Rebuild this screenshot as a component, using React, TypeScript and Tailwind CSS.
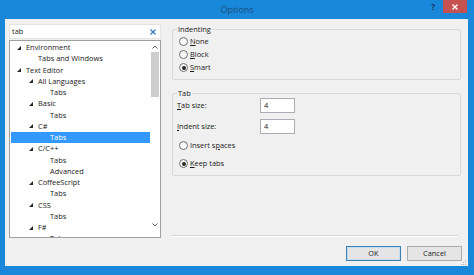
import type { ReactNode } from 'react';

type Row = { t: string; d: number; node?: boolean; sel?: boolean };

const rows: Row[] = [
  { t: 'Environment', d: 0, node: true },
  { t: 'Tabs and Windows', d: 1 },
  { t: 'Text Editor', d: 0, node: true },
  { t: 'All Languages', d: 1, node: true },
  { t: 'Tabs', d: 2 },
  { t: 'Basic', d: 1, node: true },
  { t: 'Tabs', d: 2 },
  { t: 'C#', d: 1, node: true },
  { t: 'Tabs', d: 2, sel: true },
  { t: 'C/C++', d: 1, node: true },
  { t: 'Tabs', d: 2 },
  { t: 'Advanced', d: 2 },
  { t: 'CoffeeScript', d: 1, node: true },
  { t: 'Tabs', d: 2 },
  { t: 'CSS', d: 1, node: true },
  { t: 'Tabs', d: 2 },
  { t: 'F#', d: 1, node: true },
  { t: 'Tabs', d: 2 },
];

const indent: Record<number, string> = {
  0: 'pl-[6px]',
  1: 'pl-[18px]',
  2: 'pl-[30px]',
};

function Expander() {
  return (
    <svg width="4" height="4" viewBox="0 0 4 4">
      <polygon points="4,0 4,4 0,4" fill="#262626" />
    </svg>
  );
}

function TreeRow({ row }: { row: Row }) {
  return (
    <div
      className={`flex items-center h-[11.25px] shrink-0 ml-[1px] leading-[11px] ${indent[row.d]} ${
        row.sel ? 'bg-[#3399ff] text-white' : ''
      }`}
    >
      <span className="w-[4px] h-[4px] flex">{row.node && <Expander />}</span>
      <span className="ml-[5px] whitespace-nowrap">{row.t}</span>
    </div>
  );
}

function Radio({ checked, children }: { checked?: boolean; children: ReactNode }) {
  return (
    <div className="flex items-center gap-[2px] h-[13px] ml-[2px]">
      <span className="w-[9px] h-[9px] rounded-full border border-[#707070] bg-gradient-to-b from-[#f2f2f2] to-white flex items-center justify-center">
        {checked && <span className="w-[4px] h-[4px] rounded-full bg-[#262626]" />}
      </span>
      <span className="leading-[11px]">{children}</span>
    </div>
  );
}

function Field({ label, value }: { label: ReactNode; value: string }) {
  return (
    <div className="flex items-center h-[15px]">
      <span className="w-[83px] leading-[11px]">{label}</span>
      <div className="w-[35px] h-[15px] bg-white border border-[#abadb3] pl-[3px] leading-[13px]">
        {value}
      </div>
    </div>
  );
}

function Button({ children, primary }: { children: ReactNode; primary?: boolean }) {
  return (
    <div
      className={`w-[55px] h-[15px] flex items-center justify-center bg-[#e5e5e5] border leading-[11px] ${
        primary ? 'border-[#3c7fb1] shadow-[inset_0_0_0_1px_#c4dcf2]' : 'border-[#acacac]'
      }`}
    >
      {children}
    </div>
  );
}

export default function App() {
  return (
    <div className="w-[474px] h-[275px] bg-[#1a88da] flex flex-col overflow-hidden font-['Open_Sans',sans-serif] text-[7.4px] text-[#1a1a1a]">
      {/* title bar */}
      <div className="h-[19px] flex shrink-0">
        <div className="flex-1" />
        <div className="text-[9px] leading-[19px] text-[#1d4d80]">Options</div>
        <div className="flex-1 flex justify-end items-start">
          <span className="text-[8px] font-bold leading-[14px] text-[#14375c] mr-[8px]">?</span>
          <div className="w-[24px] h-[13px] bg-[#c75050] flex items-center justify-center mr-[7px]">
            <svg width="6" height="6" viewBox="0 0 6 6">
              <path d="M0.5 0.5L5.5 5.5M5.5 0.5L0.5 5.5" stroke="white" strokeWidth="1.3" />
            </svg>
          </div>
        </div>
      </div>

      {/* client */}
      <div className="relative ml-[5px] w-[463px] h-[247px] bg-[#f0f0f0] flex flex-col">
        <div className="flex h-[219px] pt-[5px] pl-[4px] pr-[7px]">
          {/* left: search + tree */}
          <div className="w-[152px] flex flex-col gap-[1px]">
            <div className="h-[15px] bg-white border border-[#e3e3e3] flex items-center pl-[2px] pr-[4px]">
              <span className="flex-1 leading-[11px]">tab</span>
              <svg width="6" height="6" viewBox="0 0 6 6">
                <path d="M0.5 0.5L5.5 5.5M5.5 0.5L0.5 5.5" stroke="#2f79c0" strokeWidth="1.2" />
              </svg>
            </div>
            <div className="flex-1 bg-white border border-[#a0a0a0] flex overflow-hidden">
              <div className="flex-1 flex flex-col pt-[1px] overflow-hidden">
                {rows.map((r, i) => (
                  <TreeRow key={i} row={r} />
                ))}
              </div>
              <div className="w-[10px] flex flex-col items-center bg-white">
                <div className="h-[11px] flex items-center justify-center">
                  <svg width="6" height="4" viewBox="0 0 6 4">
                    <path d="M0.5 3.5L3 1L5.5 3.5" stroke="#606060" strokeWidth="1" fill="none" />
                  </svg>
                </div>
                <div className="w-[8px] h-[45px] bg-[#cdcdcd]" />
                <div className="flex-1" />
                <div className="h-[14px] flex items-start justify-center">
                  <svg width="6" height="4" viewBox="0 0 6 4">
                    <path d="M0.5 0.5L3 3L5.5 0.5" stroke="#606060" strokeWidth="1" fill="none" />
                  </svg>
                </div>
              </div>
            </div>
          </div>

          {/* right: settings */}
          <div className="ml-[11px] flex-1 flex flex-col">
            <fieldset className="border border-[#d9d9d9] rounded-[2px] pl-[4px] pb-[5px]">
              <legend className="leading-[10px] px-[1px]">Indenting</legend>
              <div className="flex flex-col pt-[1px]">
                <Radio>
                  <span className="underline">N</span>one
                </Radio>
                <Radio>
                  <span className="underline">B</span>lock
                </Radio>
                <Radio checked>
                  <span className="underline">S</span>mart
                </Radio>
              </div>
            </fieldset>

            <fieldset className="mt-[8px] border border-[#d9d9d9] rounded-[2px] pl-[4px] pb-[5px]">
              <legend className="leading-[10px] px-[1px]">Tab</legend>
              <div className="flex flex-col">
                <Field
                  label={
                    <>
                      <span className="underline">T</span>ab size:
                    </>
                  }
                  value="4"
                />
                <div className="mt-[6px]">
                  <Field
                    label={
                      <>
                        <span className="underline">I</span>ndent size:
                      </>
                    }
                    value="4"
                  />
                </div>
                <div className="mt-[5px]">
                  <Radio>
                    Insert s<span className="underline">p</span>aces
                  </Radio>
                </div>
                <div className="mt-[5px]">
                  <Radio checked>
                    <span className="underline">K</span>eep tabs
                  </Radio>
                </div>
              </div>
            </fieldset>

            <div className="mt-auto mb-[1px] h-[2px] border-t border-[#d5d5d5] border-b border-b-white mr-[3px]" />
          </div>
        </div>

        {/* buttons */}
        <div className="flex justify-end gap-[6px] pt-[8px] pr-[6px]">
          <Button primary>OK</Button>
          <Button>Cancel</Button>
        </div>

        {/* size grip */}
        <svg className="absolute right-[2px] bottom-[1px]" width="5" height="5" viewBox="0 0 5 5">
          <rect x="4" y="0" width="1" height="1" fill="#b0b0b0" />
          <rect x="2" y="2" width="1" height="1" fill="#b0b0b0" />
          <rect x="4" y="2" width="1" height="1" fill="#b0b0b0" />
          <rect x="0" y="4" width="1" height="1" fill="#b0b0b0" />
          <rect x="2" y="4" width="1" height="1" fill="#b0b0b0" />
          <rect x="4" y="4" width="1" height="1" fill="#b0b0b0" />
        </svg>
      </div>
    </div>
  );
}
